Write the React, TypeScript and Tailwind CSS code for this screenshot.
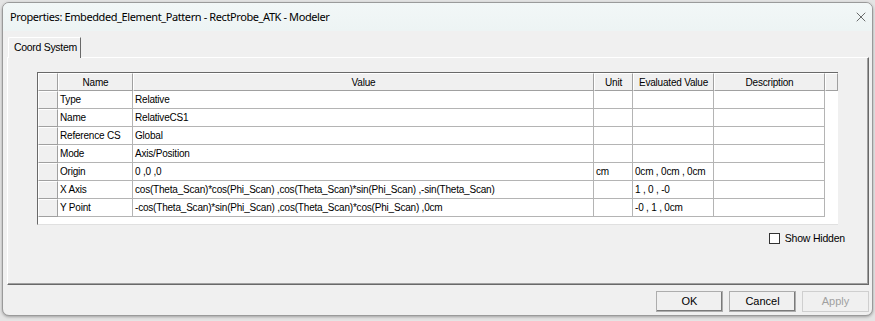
import { X } from 'lucide-react';

const rows = [
  { name: 'Type', value: 'Relative', unit: '', evaluated: '' },
  { name: 'Name', value: 'RelativeCS1', unit: '', evaluated: '' },
  { name: 'Reference CS', value: 'Global', unit: '', evaluated: '' },
  { name: 'Mode', value: 'Axis/Position', unit: '', evaluated: '' },
  { name: 'Origin', value: '0 ,0 ,0', unit: 'cm', evaluated: '0cm , 0cm , 0cm' },
  {
    name: 'X Axis',
    value: 'cos(Theta_Scan)*cos(Phi_Scan) ,cos(Theta_Scan)*sin(Phi_Scan) ,-sin(Theta_Scan)',
    unit: '',
    evaluated: '1 , 0 , -0',
  },
  {
    name: 'Y Point',
    value: '-cos(Theta_Scan)*sin(Phi_Scan) ,cos(Theta_Scan)*cos(Phi_Scan) ,0cm',
    unit: '',
    evaluated: '-0 , 1 , 0cm',
  },
];

const cols = 'grid grid-cols-[20px_75px_461px_39px_81px_111px_13px]';

function HeaderCell({ children }: { children?: React.ReactNode }) {
  return (
    <div className="h-[18px] flex items-center justify-center bg-[#f0f0f0] border-t border-l border-white border-r border-r-[#a0a0a0] border-b border-b-[#a0a0a0]">
      {children}
    </div>
  );
}

function Cell({ children }: { children?: React.ReactNode }) {
  return (
    <div className="h-[18px] flex items-center pl-[2px] bg-white border-r border-b border-[#b4b4b4] whitespace-nowrap overflow-hidden">
      {children}
    </div>
  );
}

function Button({ label, disabled }: { label: string; disabled?: boolean }) {
  return (
    <button
      disabled={disabled}
      className={
        'w-[67px] h-[21px] flex items-center justify-center bg-[#f0f0f0] border border-[#adadad] text-[11px] font-[\'Liberation_Sans\',sans-serif] ' +
        (disabled ? 'text-[#a0a0a0] border-[#cfcfcf]' : 'text-black shadow-[inset_-1px_-1px_0_#7a7a7a]')
      }
    >
      {label}
    </button>
  );
}

export default function App() {
  return (
    <div className="w-[875px] h-[321px] bg-[#e4e4e4] overflow-hidden pt-[2px] pl-[2px] font-['Noto_Sans',sans-serif]">
      <div className="w-[871px] h-[314px] rounded-[7px] border border-[#9a9a9a] bg-[#f0f0f0] overflow-hidden flex flex-col shadow-[0_1px_3px_rgba(0,0,0,0.3)]">
        {/* title bar */}
        <div className="h-[28px] flex items-center justify-between pl-[7px] pr-[3px] bg-gradient-to-b from-[#f2f7f7] to-[#edf4f4]">
          <span className="text-[11px] text-black tracking-[-0.4px] whitespace-nowrap">
            Properties: Embedded_Element_Pattern - RectProbe_ATK - Modeler
          </span>
          <X className="w-[16px] h-[16px] text-[#222]" strokeWidth={1} />
        </div>

        {/* tab strip */}
        <div className="pl-[5px] pt-[5px] flex">
          <div className="h-[21px] w-[73px] pl-[5px] flex items-center whitespace-nowrap text-[10.5px] font-['Liberation_Sans',sans-serif] tracking-[-0.3px] bg-[#f0f0f0] border-t border-l border-white border-r border-r-[#696969] relative top-[1px] z-10 rounded-tl-[2px]">
            Coord System
          </div>
        </div>

        {/* tab panel */}
        <div className="ml-[4px] w-[862px] h-[228px] border-t border-l border-white border-r border-b border-r-[#696969] border-b-[#696969] shadow-[inset_-1px_-1px_0_#a0a0a0] flex flex-col">
          <div className="ml-[29px] mt-[14px] w-[801px] h-[153px] bg-white border-t border-l border-[#696969] border-b border-b-[#e0e0e0] text-[10px] font-['Liberation_Sans',sans-serif] text-black tracking-[-0.2px]">
            <div className={cols}>
              <HeaderCell />
              <HeaderCell>Name</HeaderCell>
              <HeaderCell>Value</HeaderCell>
              <HeaderCell>Unit</HeaderCell>
              <HeaderCell>Evaluated Value</HeaderCell>
              <HeaderCell>Description</HeaderCell>
              <HeaderCell />
            </div>
            {rows.map((r) => (
              <div key={r.name} className={cols}>
                <HeaderCell />
                <Cell>{r.name}</Cell>
                <Cell>{r.value}</Cell>
                <Cell>{r.unit}</Cell>
                <Cell>{r.evaluated}</Cell>
                <Cell />
              </div>
            ))}
          </div>

          <div className="flex justify-end items-center pr-[23px] mt-[6px] gap-[5px] text-[10.5px] font-['Liberation_Sans',sans-serif] tracking-[-0.2px]">
            <span className="w-[11px] h-[11px] border border-[#333] bg-white" />
            <span>Show Hidden</span>
          </div>
        </div>

        {/* buttons */}
        <div className="flex justify-end gap-[6px] pr-[3px] mt-[6px]">
          <Button label="OK" />
          <Button label="Cancel" />
          <Button label="Apply" disabled />
        </div>
      </div>
    </div>
  );
}
